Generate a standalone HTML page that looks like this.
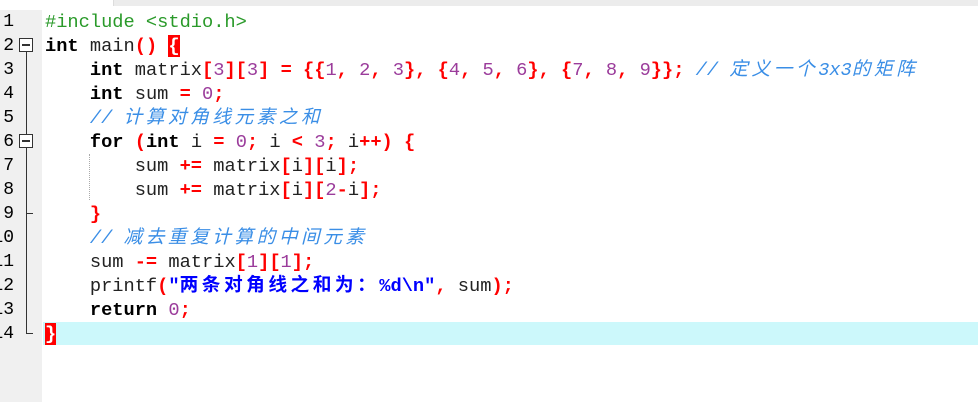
<!DOCTYPE html>
<html><head><meta charset="utf-8"><style>
html,body{margin:0;padding:0;background:#fff;width:978px;height:402px;overflow:hidden;position:relative}
.top{position:absolute;left:113px;top:0;width:865px;height:6px;background:#ececec;border-left:1px solid #ddd}
.gut{position:absolute;left:0;top:10px;width:42px;height:392px;background:#f0f0f0}
.num{position:absolute;left:0;width:14px;text-align:right;font:18px/24px "Liberation Mono",monospace;color:#000;overflow:hidden;white-space:nowrap;direction:rtl}
.cur{position:absolute;left:43px;top:322px;width:935px;height:23px;background:#ccf8fb}
.code{position:absolute;left:45px;top:10px;font:18.7px/24px "Liberation Mono","Noto Sans CJK SC",monospace;color:#222}
.code div{height:24px;line-height:24px;overflow:visible;white-space:pre}
.k{font-weight:bold;color:#000}
.o{font-weight:bold;color:#f00}
.n{color:#9b3c9b}
.p{color:#2a9a2a}
.c{color:#3a8ee6;font-style:italic}
.s{color:#0000ff;font-weight:bold}
.z{font-family:"Noto Sans CJK SC",sans-serif;letter-spacing:3.5px;font-size:18.7px;line-height:0}
.box{position:absolute;left:19px;width:12px;height:12px;border:1px solid #333;background:#fff}
.box:after{content:"";position:absolute;left:2px;top:5px;width:8px;height:2px;background:#333}
.vl{position:absolute;left:26px;width:1px;background:#333}
.hl{position:absolute;left:26px;width:7px;height:1px;background:#333}
.br{background:#f00;color:#fff;font-weight:bold}
</style></head><body>
<div class="top"></div>
<div class="gut"></div>
<div class="cur"></div>
<div class="num" style="top:10px">1</div>
<div class="num" style="top:34px">2</div>
<div class="num" style="top:58px">3</div>
<div class="num" style="top:82px">4</div>
<div class="num" style="top:106px">5</div>
<div class="num" style="top:130px">6</div>
<div class="num" style="top:154px">7</div>
<div class="num" style="top:178px">8</div>
<div class="num" style="top:202px">9</div>
<div class="num" style="top:226px">10</div>
<div class="num" style="top:250px">11</div>
<div class="num" style="top:274px">12</div>
<div class="num" style="top:298px">13</div>
<div class="num" style="top:322px">14</div>
<div class="vl" style="top:52px;height:282px"></div>
<div class="box" style="top:38px"></div>
<div class="box" style="top:134px"></div>
<div class="hl" style="top:213px"></div>
<div class="hl" style="top:333px"></div>
<div style="position:absolute;left:89px;top:154px;height:46px;border-left:1px dotted #aaa"></div>
<div class="code"><div><span class="p">#include &lt;stdio.h&gt;</span></div><div><span class="k">int</span> main<span class="o">()</span> <span class="br">{</span></div><div>    <span class="k">int</span> matrix<span class="o">[</span><span class="n">3</span><span class="o">][</span><span class="n">3</span><span class="o">]</span> <span class="o">=</span> <span class="o">{{</span><span class="n">1</span><span class="o">,</span> <span class="n">2</span><span class="o">,</span> <span class="n">3</span><span class="o">},</span> <span class="o">{</span><span class="n">4</span><span class="o">,</span> <span class="n">5</span><span class="o">,</span> <span class="n">6</span><span class="o">},</span> <span class="o">{</span><span class="n">7</span><span class="o">,</span> <span class="n">8</span><span class="o">,</span> <span class="n">9</span><span class="o">}};</span> <span class="c">// <span class="z">定义一个</span>3x3<span class="z">的矩阵</span></span></div><div>    <span class="k">int</span> sum <span class="o">=</span> <span class="n">0</span><span class="o">;</span></div><div>    <span class="c">// <span class="z">计算对角线元素之和</span></span></div><div>    <span class="k">for</span> <span class="o">(</span><span class="k">int</span> i <span class="o">=</span> <span class="n">0</span><span class="o">;</span> i <span class="o">&lt;</span> <span class="n">3</span><span class="o">;</span> i<span class="o">++)</span> <span class="o">{</span></div><div>        sum <span class="o">+=</span> matrix<span class="o">[</span>i<span class="o">][</span>i<span class="o">];</span></div><div>        sum <span class="o">+=</span> matrix<span class="o">[</span>i<span class="o">][</span><span class="n">2</span><span class="o">-</span>i<span class="o">];</span></div><div>    <span class="o">}</span></div><div>    <span class="c">// <span class="z">减去重复计算的中间元素</span></span></div><div>    sum <span class="o">-=</span> matrix<span class="o">[</span><span class="n">1</span><span class="o">][</span><span class="n">1</span><span class="o">];</span></div><div>    printf<span class="o">(</span><span class="s">"<span class="z">两条对角线之和为：</span>%d\n"</span><span class="o">,</span> sum<span class="o">);</span></div><div>    <span class="k">return</span> <span class="n">0</span><span class="o">;</span></div><div><span class="br">}</span></div></div>
</body></html>
